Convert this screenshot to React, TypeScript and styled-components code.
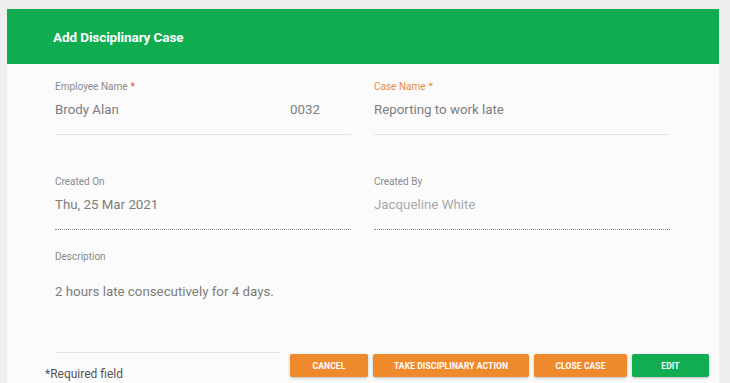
import React from "react";
import styled, { createGlobalStyle } from "styled-components";

const Global = createGlobalStyle`
  html, body { margin: 0; padding: 0; background: #efefef; }
  body { font-family: Roboto, "Noto Sans", "Liberation Sans", sans-serif; }
  * { box-sizing: border-box; }
`;

const Page = styled.div`
  width: 730px;
  height: 383px;
  padding: 9px 11px 0 7px;
  overflow: hidden;
  background: #efefef;
`;

const Card = styled.div`
  height: 374px;
  background: #fbfbfb;
  display: flex;
  flex-direction: column;
`;

const Header = styled.div`
  flex: 0 0 55px;
  height: 55px;
  background: #10ad50;
  display: flex;
  align-items: center;
  padding-left: 46px;
  color: #fff;
  font-weight: 700;
  font-size: 13.5px;
  letter-spacing: -0.1px;
`;

const Body = styled.div`
  padding: 16px 10px 0 48px;
  display: flex;
  flex-direction: column;
`;

const Grid = styled.div`
  display: grid;
  grid-template-columns: 296px 296px;
  column-gap: 23px;
  row-gap: 40px;
`;

const Field = styled.div<{ $dotted?: boolean; $width?: number }>`
  display: flex;
  flex-direction: column;
  width: ${(p) => (p.$width ? `${p.$width}px` : "auto")};
  border-bottom: 1px ${(p) => (p.$dotted ? "dotted #8a8a8a" : "solid #e4e4e4")};
`;

const Label = styled.div<{ $accent?: boolean }>`
  font-size: 10px;
  line-height: 14px;
  color: ${(p) => (p.$accent ? "#e98a47" : "#8a8a8a")};
`;

const Star = styled.span<{ $accent?: boolean }>`
  color: ${(p) => (p.$accent ? "#e98a47" : "#e0454f")};
  margin-left: 3px;
`;

const Value = styled.div<{ $light?: boolean; $gap?: number; $pad?: number }>`
  display: flex;
  justify-content: space-between;
  white-space: nowrap;
  font-size: 13.3px;
  line-height: 20px;
  margin-top: ${(p) => p.$gap ?? 6}px;
  padding-bottom: ${(p) => p.$pad ?? 14}px;
  color: ${(p) => (p.$light ? "#a9a9a9" : "#7d7d7d")};
  padding-right: 31px;
`;

const Bottom = styled.div`
  display: flex;
  justify-content: space-between;
  align-items: flex-end;
  margin-top: 20px;
`;

const LeftBlock = styled.div`
  display: flex;
  flex-direction: column;
`;

const Required = styled.div`
  margin-left: -10px;
  margin-top: 14px;
  font-size: 12px;
  line-height: 14px;
  color: #555;
`;

const Buttons = styled.div`
  display: flex;
  gap: 5px;
  margin-bottom: 4px;
`;

const Button = styled.button<{ $w: number; $green?: boolean }>`
  width: ${(p) => p.$w}px;
  height: 23px;
  border: none;
  border-radius: 2px;
  background: ${(p) => (p.$green ? "#12ad50" : "#ef8a2c")};
  color: #fff;
  font-family: Roboto, "Liberation Sans", sans-serif;
  font-weight: 700;
  font-size: 8.5px;
  letter-spacing: 0.1px;
  text-transform: uppercase;
  box-shadow: 0 1px 3px rgba(0, 0, 0, 0.25);
  padding: 0;
`;

export default function App() {
  return (
    <>
      <Global />
      <Page>
        <Card>
          <Header>Add Disciplinary Case</Header>
          <Body>
            <Grid>
              <Field>
                <Label>
                  Employee Name<Star>*</Star>
                </Label>
                <Value>
                  <span>Brody Alan</span>
                  <span>0032</span>
                </Value>
              </Field>
              <Field>
                <Label $accent>
                  Case Name<Star $accent>*</Star>
                </Label>
                <Value>Reporting to work late</Value>
              </Field>
              <Field $dotted>
                <Label>Created On</Label>
                <Value>Thu, 25 Mar 2021</Value>
              </Field>
              <Field $dotted>
                <Label>Created By</Label>
                <Value $light>Jacqueline White</Value>
              </Field>
            </Grid>
            <Bottom>
              <LeftBlock>
                <Field $width={225}>
                  <Label>Description</Label>
                  <Value $gap={18} $pad={50}>2 hours late consecutively for 4 days.</Value>
                </Field>
                <Required>*Required field</Required>
              </LeftBlock>
              <Buttons>
                <Button $w={78}>Cancel</Button>
                <Button $w={156}>Take Disciplinary Action</Button>
                <Button $w={93}>Close Case</Button>
                <Button $w={77} $green>
                  Edit
                </Button>
              </Buttons>
            </Bottom>
          </Body>
        </Card>
      </Page>
    </>
  );
}
